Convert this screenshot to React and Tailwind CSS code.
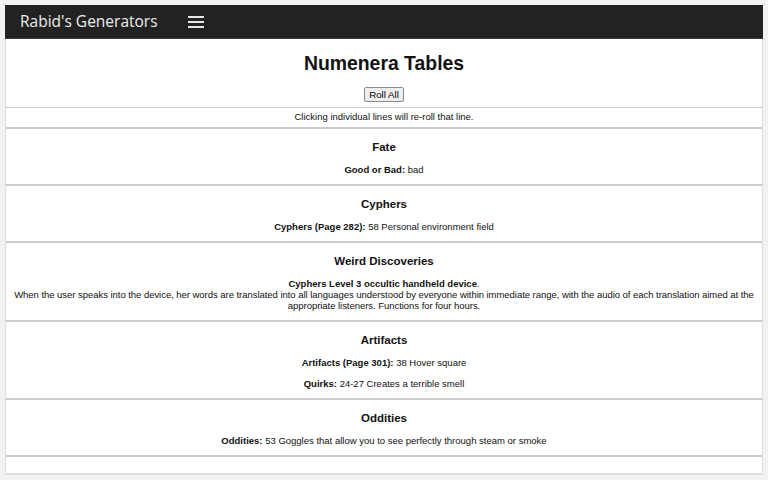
export default function App() {
  const sections = [
    {
      title: "Fate",
      rows: [[<b key="b">Good or Bad:</b>, " bad"]],
    },
    {
      title: "Cyphers",
      rows: [[<b key="b">Cyphers (Page 282):</b>, " 58 Personal environment field"]],
    },
    {
      title: "Weird Discoveries",
      rows: [
        [
          <b key="b">Cyphers Level 3 occultic handheld device</b>,
          ".",
          <br key="br" />,
          <span key="d" className="tracking-[-0.04px]">
            When the user speaks into the device, her words are translated into all languages understood by everyone within immediate range, with the audio of each translation aimed at the appropriate listeners. Functions for four hours.
          </span>,
        ],
      ],
    },
    {
      title: "Artifacts",
      rows: [
        [<b key="b">Artifacts (Page 301):</b>, " 38 Hover square"],
        [<b key="b">Quirks:</b>, " 24-27 Creates a terrible smell"],
      ],
    },
    {
      title: "Oddities",
      rows: [[<b key="b">Oddities:</b>, " 53 Goggles that allow you to see perfectly through steam or smoke"]],
    },
  ];
  return (
    <div className="min-h-[480px] bg-[#f2f2f2] p-[5px]" style={{ fontFamily: '"Liberation Sans", Arial, sans-serif' }}>
      <div className="bg-white border border-[#dddddd] border-t-0">
        <div className="h-[34px] bg-[#222222] border-b border-[#3a3a3a] flex items-center -mx-px">
          <span className="ml-[15px] text-[15.5px] text-[#eeeeee]" style={{ fontFamily: '"Open Sans", sans-serif' }}>
            Rabid's Generators
          </span>
          <div className="ml-[30px] flex flex-col gap-[3px] w-[16px]">
            <div className="h-[2px] bg-[#e6e6e6]" />
            <div className="h-[2px] bg-[#e6e6e6]" />
            <div className="h-[2px] bg-[#e6e6e6]" />
          </div>
        </div>
        <div className="flex flex-col items-center pt-[12px] pb-[5px] border-b border-[#cccccc] text-[#111111]">
          <h1 className="text-[19.4px] leading-[24px] font-bold">Numenera Tables</h1>
          <button className="mt-[12px] h-[15px] px-[4px] text-[9.7px] leading-[13px] bg-[#efefef] border border-[#8a8a8a] rounded-[2px] text-black">
            Roll All
          </button>
        </div>
        <div className="h-[21px] flex items-center justify-center text-[9.5px] text-[#111111] border-b-2 border-[#cccccc]">
          Clicking individual lines will re-roll that line.
        </div>
        {sections.map((s) => (
          <div key={s.title} className="pt-[11px] pb-[9px] border-b-2 border-[#cccccc] text-center text-[#111111]">
            <h3 className="text-[11.5px] leading-[14px] font-bold">{s.title}</h3>
            {s.rows.map((r, i) => (
              <p key={i} className="mt-[10px] text-[9.5px] leading-[11px]">
                {r}
              </p>
            ))}
          </div>
        ))}
        <div className="h-[17px] border-b border-[#dddddd]" />
      </div>
    </div>
  );
}
